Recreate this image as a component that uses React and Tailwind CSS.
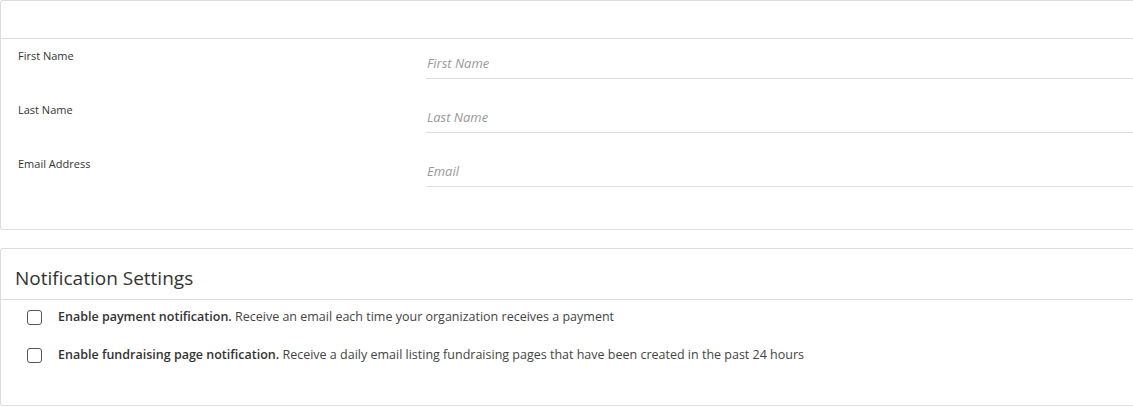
import React from 'react';

const fields = [
  { label: 'First Name', placeholder: 'First Name' },
  { label: 'Last Name', placeholder: 'Last Name' },
  { label: 'Email Address', placeholder: 'Email' },
];

const notifications = [
  {
    title: 'Enable payment notification.',
    text: 'Receive an email each time your organization receives a payment',
  },
  {
    title: 'Enable fundraising page notification.',
    text: 'Receive a daily email listing fundraising pages that have been created in the past 24 hours',
  },
];

const App = () => {
  return (
    <div className="min-h-screen bg-white font-['Open_Sans',sans-serif] text-[#333] overflow-hidden">
      {/* Profile card */}
      <div className="border border-r-0 border-[#ddd] rounded-l-[3px]">
        <div className="h-[38px] border-b border-[#ddd]" />
        <div className="pb-[28px]">
          {fields.map((field) => (
            <div key={field.label} className="flex h-[54px]">
              <label className="w-[425px] shrink-0 pl-[17px] pt-[10px] text-[11px] leading-[14px] text-[#333]">
                {field.label}
              </label>
              <div className="flex-1">
                <input
                  type="text"
                  placeholder={field.placeholder}
                  className="mt-[9px] h-[31px] w-full border-b border-[#ddd] px-px text-[13px] italic outline-none placeholder:text-[#999]"
                />
              </div>
            </div>
          ))}
        </div>
      </div>

      {/* Notification settings */}
      <div className="mt-[18px] border border-r-0 border-[#ddd] rounded-l-[3px]">
        <div className="h-[51px] border-b border-[#ddd] pl-[14px] pt-[17px]">
          <h3 className="text-[19px] leading-[24px] text-[#333]">Notification Settings</h3>
        </div>
        <div className="flex flex-col gap-[20px] pt-[8px] pb-[41px]">
          {notifications.map((item) => (
            <label key={item.title} className="flex items-center h-[18px] pl-[26px] text-[12.5px]">
              <input
                type="checkbox"
                className="appearance-none w-[15px] h-[15px] shrink-0 rounded-[3px] border border-[#555] bg-white"
              />
              <span className="ml-[16px] whitespace-nowrap">
                <strong className="font-semibold text-[#333]">{item.title}</strong>{' '}
                <span className="text-[#444]">{item.text}</span>
              </span>
            </label>
          ))}
        </div>
      </div>
    </div>
  );
};

export default App;
